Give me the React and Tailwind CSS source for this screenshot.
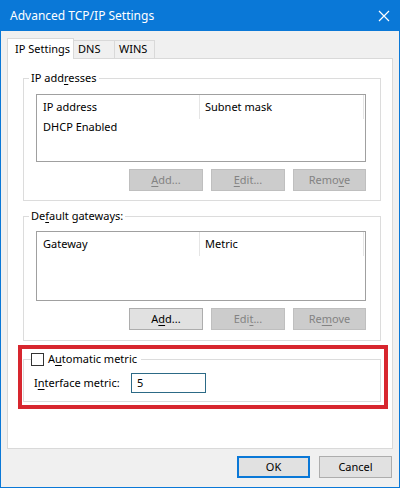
import React from "react"

const font = { fontFamily: '"Noto Sans", "Liberation Sans", sans-serif' }

function U({ children }) {
  return <span className="underline underline-offset-2">{children}</span>
}

function Button({ children, disabled, primary, className = "" }) {
  const look = disabled
    ? "bg-[#cccccc] border border-[#bfbfbf] text-[#838383]"
    : primary
      ? "bg-[#e1e1e1] border-2 border-[#0a78d7] text-black"
      : "bg-[#e1e1e1] border border-[#adadad] text-black"
  return (
    <div className={`h-[22px] flex items-center justify-center text-[11px] ${look} ${className}`}>
      {children}
    </div>
  )
}

function ListBox({ col1, col2, rows = [], height }) {
  return (
    <div className={`ml-[12px] mr-[14px] bg-white border border-[#a0a0a0] ${height}`}>
      <div className="flex h-[24px] items-center">
        <div className="w-[163px] h-full flex items-center pl-[6px] border-r border-[#e5e5e5]">{col1}</div>
        <div className="flex-1 h-full flex items-center pl-[5px] border-r border-[#e5e5e5] mr-[1px]">{col2}</div>
      </div>
      {rows.map((r) => (
        <div key={r} className="h-[16px] flex items-center pl-[6px]">{r}</div>
      ))}
    </div>
  )
}

function ButtonRow({ add, edit, remove, addEnabled }) {
  return (
    <div className="flex justify-end gap-[8px] mr-[14px] mt-[7px]">
      <Button disabled={!addEnabled} className="w-[74px]">{add}</Button>
      <Button disabled className="w-[74px]">{edit}</Button>
      <Button disabled className="w-[73px]">{remove}</Button>
    </div>
  )
}

export default function App() {
  return (
    <div style={font} className="w-[400px] h-[488px] bg-[#f0f0f0] border border-[#0a78d7] flex flex-col text-[11px] text-black">
      {/* title bar */}
      <div className="h-[30px] shrink-0 bg-[#0a78d7] flex items-center justify-between pl-[9px] pr-[7px]">
        <span className="text-white text-[12px]">Advanced TCP/IP Settings</span>
        <svg width="12" height="12" viewBox="0 0 12 12" className="mr-[2px]">
          <path d="M1 1 L11 11 M11 1 L1 11" stroke="white" strokeWidth="1.2" fill="none" />
        </svg>
      </div>

      <div className="flex-1 flex flex-col px-[6px]">
        {/* tabs */}
        <div className="flex items-end mt-[7px] h-[20px]">
          <div className="relative z-10 -mb-px h-[21px] w-[67px] bg-white border border-b-0 border-[#d9d9d9] flex items-center pl-[7px]">
            IP Settings
          </div>
          <div className="h-[18px] w-[41px] border border-l-0 border-b-0 border-[#d9d9d9] bg-[#f0f0f0] flex items-center pl-[4px]">
            DNS
          </div>
          <div className="h-[18px] w-[40px] border border-l-0 border-b-0 border-[#d9d9d9] bg-[#f0f0f0] flex items-center pl-[4px]">
            WINS
          </div>
        </div>

        {/* panel */}
        <div className="h-[391px] bg-white border border-[#d9d9d9] pl-[15px] pr-[11px] pt-[11px]">
          <fieldset className="border border-[#dcdcdc] pb-[9px]">
            <legend className="ml-[5px] px-[2px] h-[16px] leading-[16px]">
              IP add<U>r</U>esses
            </legend>
            <div className="mt-[8px]">
              <ListBox col1="IP address" col2="Subnet mask" rows={["DHCP Enabled"]} height="h-[68px]" />
            </div>
            <ButtonRow
              add={<span><U>A</U>dd...</span>}
              edit={<span><U>E</U>dit...</span>}
              remove={<span>Remo<U>v</U>e</span>}
            />
          </fieldset>

          <fieldset className="mt-[7px] border border-[#dcdcdc] pb-[10px]">
            <legend className="ml-[5px] px-[2px] h-[16px] leading-[16px]">
              De<U>f</U>ault gateways:
            </legend>
            <div className="mt-[7px]">
              <ListBox col1="Gateway" col2="Metric" height="h-[70px]" />
            </div>
            <ButtonRow
              addEnabled
              add={<span>A<U>d</U>d...</span>}
              edit={<span>Edi<U>t</U>...</span>}
              remove={<span>Re<U>m</U>ove</span>}
            />
          </fieldset>

          {/* highlighted metric group */}
          <div className="mt-[4px] -ml-[5px] -mr-[7px] border-4 border-[#d7262e] pl-[1px] pr-[3px] pt-[2px] pb-[3px]">
            <fieldset className="border border-[#dcdcdc] pb-[8px]">
              <legend className="ml-[7px] h-[16px] flex items-center gap-[4px] pr-[4px]">
                <span className="w-[13px] h-[13px] border border-[#333333] bg-white inline-block" />
                <span>A<U>u</U>tomatic metric</span>
              </legend>
              <div className="mt-[6px] flex items-center">
                <span className="w-[107px] pl-[10px]">I<U>n</U>terface metric:</span>
                <div className="w-[75px] h-[20px] border border-[#2c6a86] bg-white flex items-center pl-[5px]">5</div>
              </div>
            </fieldset>
          </div>
        </div>

        {/* dialog buttons */}
        <div className="flex justify-end gap-[9px] mt-[7px] pr-[1px]">
          <Button primary className="w-[73px]">OK</Button>
          <Button className="w-[73px]">Cancel</Button>
        </div>
      </div>
    </div>
  )
}
